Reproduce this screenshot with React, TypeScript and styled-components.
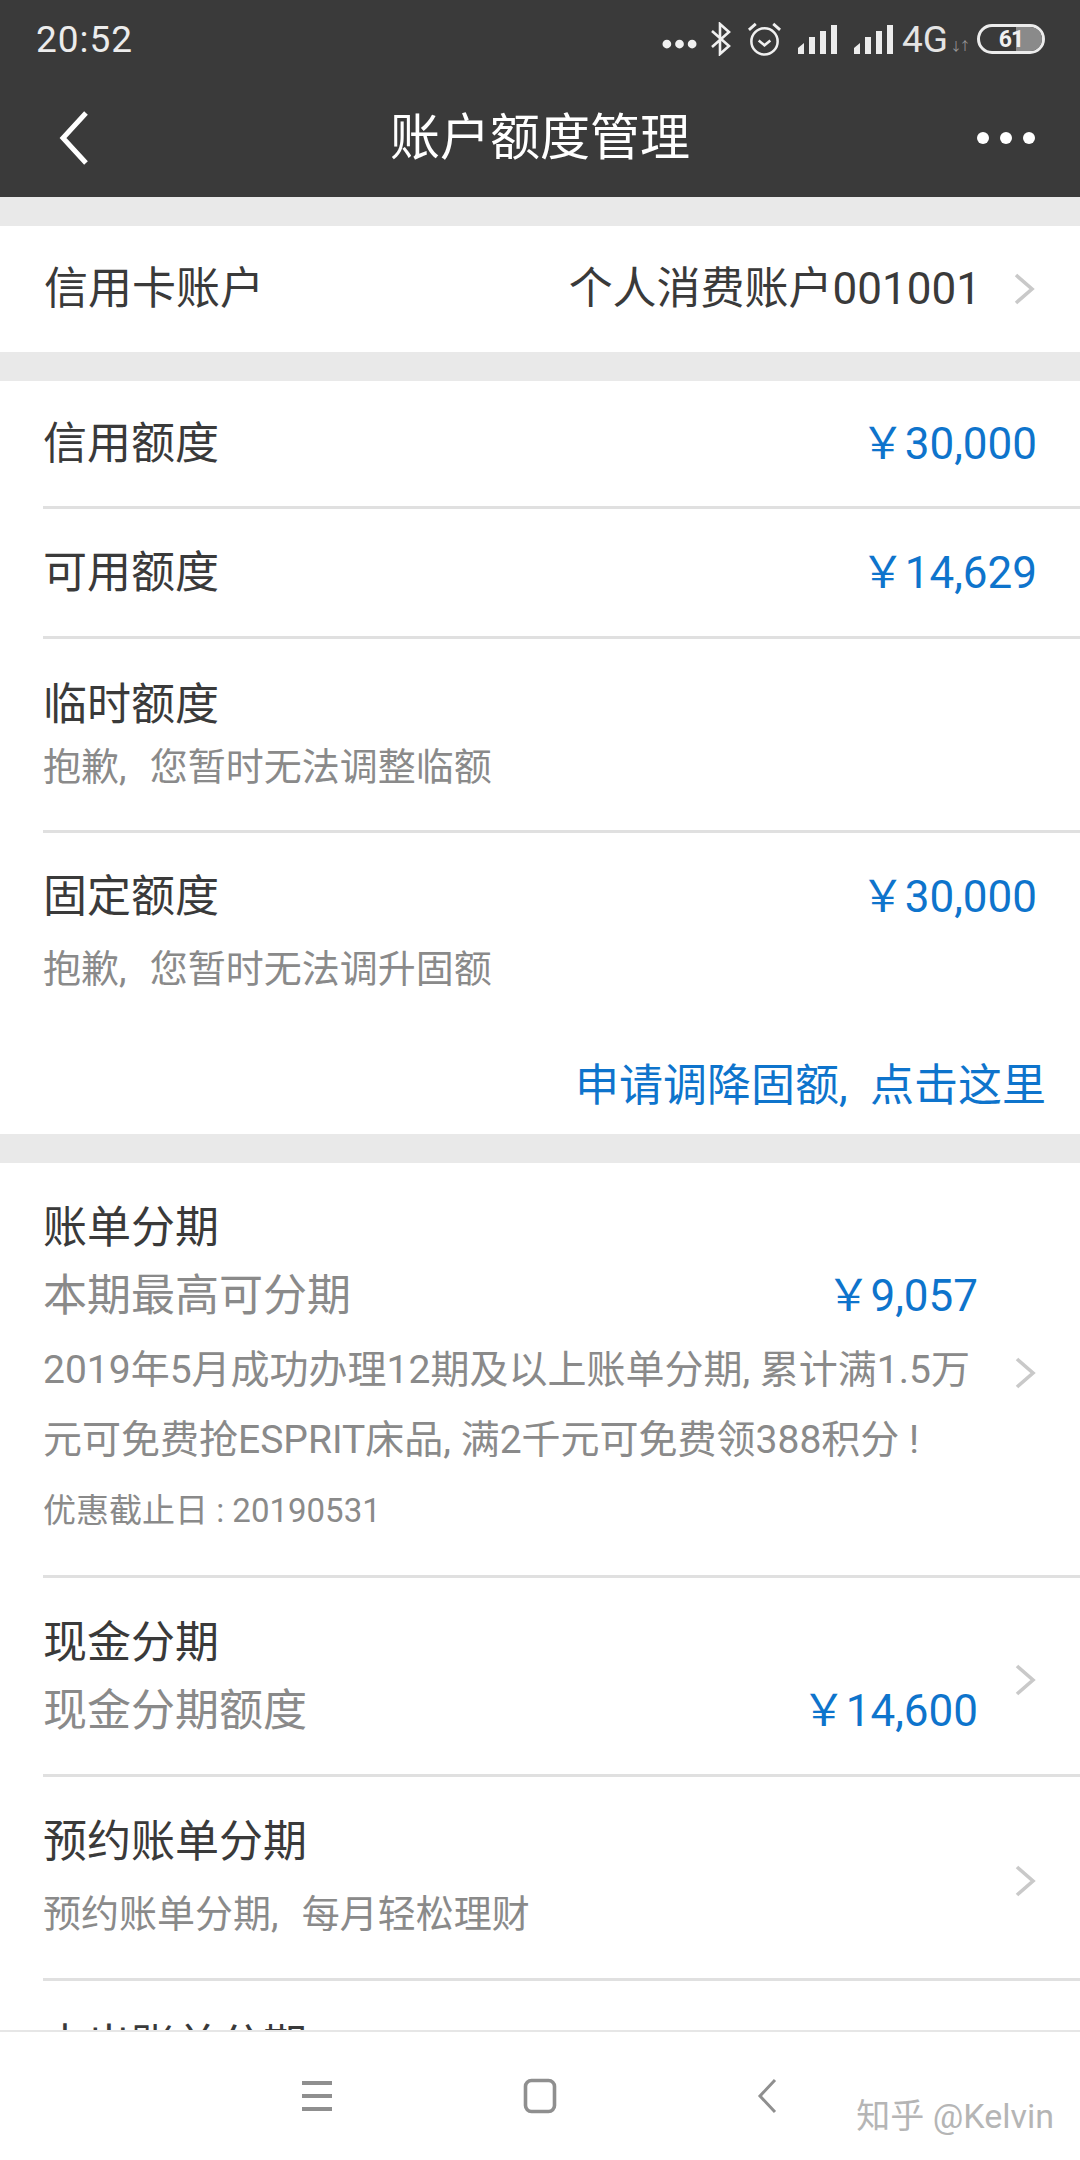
import React from 'react'
import styled, { createGlobalStyle } from 'styled-components'

const GlobalStyle = createGlobalStyle`
  html, body {
    margin: 0;
    padding: 0;
    background: #fff;
  }
  * {
    box-sizing: border-box;
  }
`

const Chevron = () => (
  <ChevronSvg viewBox="0 0 22 32">
    <path d="M3 2 L19 16 L3 30" fill="none" stroke="#c9c9c9" strokeWidth="3.6" />
  </ChevronSvg>
)

const SignalBars = () => (
  <svg width="40" height="29" viewBox="0 0 40 29">
    <path d="M0 29V23L6 18V29Z" fill="#ececec" />
    <rect x="11" y="12" width="6" height="17" fill="#ececec" />
    <rect x="22" y="6" width="6" height="23" fill="#ececec" />
    <rect x="33" y="0" width="6" height="29" fill="#ececec" />
  </svg>
)

const App = () => (
  <Screen>
    <GlobalStyle />
    <Header>
      <StatusBar>
        <Clock>20:52</Clock>
        <StatusIcons>
          <StatusDots viewBox="0 0 36 12">
            <circle cx="5" cy="6" r="4.5" fill="#f0f0f0" />
            <circle cx="18" cy="6" r="4.5" fill="#f0f0f0" />
            <circle cx="31" cy="6" r="4.5" fill="#f0f0f0" />
          </StatusDots>
          <BluetoothIcon viewBox="0 0 24 34">
            <path d="M3 9 L20 24 L11 32 V2 L20 10 L3 25" fill="none" stroke="#f0f0f0" strokeWidth="2.6" />
          </BluetoothIcon>
          <AlarmIcon viewBox="0 0 36 36">
            <circle cx="18" cy="20" r="13.5" fill="none" stroke="#f0f0f0" strokeWidth="2.6" />
            <path d="M12 19 L18 24 L24 19" fill="none" stroke="#f0f0f0" strokeWidth="2.6" />
            <path d="M2 8 L9 2 M34 8 L27 2" fill="none" stroke="#f0f0f0" strokeWidth="3" />
          </AlarmIcon>
          <SignalGroup>
            <SignalBars />
            <SignalBars />
          </SignalGroup>
          <Network>4G</Network>
          <DataArrows>↓↑</DataArrows>
          <Battery>
            <BatteryFill />
            <BatteryLevel>61</BatteryLevel>
          </Battery>
        </StatusIcons>
      </StatusBar>
      <TitleBar>
        <BackIcon viewBox="0 0 32 56">
          <path d="M28 3 L5 28 L28 53" fill="none" stroke="#fff" strokeWidth="5" />
        </BackIcon>
        <Title>账户额度管理</Title>
        <MoreIcon viewBox="0 0 60 14">
          <circle cx="7" cy="7" r="6" fill="#fff" />
          <circle cx="30" cy="7" r="6" fill="#fff" />
          <circle cx="53" cy="7" r="6" fill="#fff" />
        </MoreIcon>
      </TitleBar>
    </Header>

    <Content>
      <Card>
        <AccountRow>
          <Label>信用卡账户</Label>
          <AccountValue>
            <span>个人消费账户001001</span>
            <Chevron />
          </AccountValue>
        </AccountRow>
      </Card>

      <Card>
        <QuotaRow $height={128}>
          <Label>信用额度</Label>
          <Amount>￥30,000</Amount>
        </QuotaRow>
        <QuotaRow $height={130}>
          <Label>可用额度</Label>
          <Amount>￥14,629</Amount>
        </QuotaRow>
        <StackRow>
          <Label>临时额度</Label>
          <Note>抱歉,{'\u2002\u200a'}您暂时无法调整临额</Note>
        </StackRow>
        <FixedBlock>
          <SplitLine>
            <Label>固定额度</Label>
            <Amount>￥30,000</Amount>
          </SplitLine>
          <Note $loose>抱歉,{'\u2002\u200a'}您暂时无法调升固额</Note>
          <ActionLink>申请调降固额,{'\u2002'}点击这里</ActionLink>
        </FixedBlock>
      </Card>

      <Card>
        <LinkRow $height={415}>
          <LinkBody>
            <Label>账单分期</Label>
            <MutedLine>
              <MutedLabel>本期最高可分期</MutedLabel>
              <Amount>￥9,057</Amount>
            </MutedLine>
            <Promo>
              2019年5月成功办理12期及以上账单分期, 累计满1.5万
              <br />
              元可免费抢ESPRIT床品, 满2千元可免费领388积分 !
            </Promo>
            <Deadline>优惠截止日 : 20190531</Deadline>
          </LinkBody>
          <Chevron />
        </LinkRow>
        <LinkRow $height={199}>
          <LinkBody>
            <Label>现金分期</Label>
            <MutedLine>
              <MutedLabel>现金分期额度</MutedLabel>
              <Amount>￥14,600</Amount>
            </MutedLine>
          </LinkBody>
          <Chevron />
        </LinkRow>
        <LinkRow $height={204}>
          <LinkBody>
            <Label>预约账单分期</Label>
            <Note $loose>预约账单分期,{'\u2002\u200a'}每月轻松理财</Note>
          </LinkBody>
          <Chevron />
        </LinkRow>
        <LinkRow $height={120}>
          <LinkBody>
            <Label>未出账单分期</Label>
          </LinkBody>
        </LinkRow>
      </Card>
    </Content>

    <BottomNav>
      <svg width="34" height="32" viewBox="0 0 34 32">
        <path d="M2 3H32M2 16H32M2 29H32" fill="none" stroke="#8f8f8f" strokeWidth="4" />
      </svg>
      <svg width="34" height="36" viewBox="0 0 34 36">
        <rect x="2.5" y="2.5" width="29" height="31" rx="6" fill="none" stroke="#8f8f8f" strokeWidth="3.6" />
      </svg>
      <NavBack viewBox="0 0 22 36">
        <path d="M19 2 L4 18 L19 34" fill="none" stroke="#8f8f8f" strokeWidth="3" />
      </NavBack>
    </BottomNav>
    <Watermark>知乎 @Kelvin</Watermark>
  </Screen>
)

const FONT = `Roboto, "Noto Sans CJK SC", sans-serif`
const BLUE = '#0e74cc'

const Screen = styled.div`
  position: relative;
  display: flex;
  flex-direction: column;
  width: 1080px;
  height: 2160px;
  overflow: hidden;
  background: #fff;
  font-family: ${FONT};
`
const Header = styled.header`
  flex: none;
  height: 197px;
  background: #3a3a3a;
  color: #fff;
`
const StatusBar = styled.div`
  display: flex;
  align-items: center;
  justify-content: space-between;
  height: 78px;
  padding: 0 35px 0 36px;
`
const Clock = styled.span`
  font-size: 37px;
  color: #ececec;
  letter-spacing: 1px;
`
const StatusIcons = styled.div`
  display: flex;
  align-items: center;
`
const StatusDots = styled.svg`
  width: 35px;
  height: 12px;
  margin: 10px 12px 0 0;
`
const BluetoothIcon = styled.svg`
  width: 24px;
  height: 34px;
  margin-right: 14px;
`
const AlarmIcon = styled.svg`
  width: 35px;
  height: 35px;
  margin-right: 16px;
`
const SignalGroup = styled.div`
  display: flex;
  gap: 16px;
  margin-right: 8px;
`
const Network = styled.span`
  font-size: 37px;
  color: #e4e4e4;
`
const DataArrows = styled.span`
  font-size: 12px;
  color: #999;
  margin: 12px 9px 0 2px;
  letter-spacing: -3px;
`
const Battery = styled.div`
  position: relative;
  display: flex;
  align-items: center;
  justify-content: center;
  width: 68px;
  height: 30px;
  border: 3px solid #ececec;
  border-radius: 15px;
  overflow: hidden;
`
const BatteryFill = styled.div`
  position: absolute;
  right: 0;
  top: 0;
  bottom: 0;
  width: 26px;
  background: #8a8a8a;
`
const BatteryLevel = styled.span`
  position: relative;
  font-size: 23px;
  font-weight: 700;
  color: #f0f0f0;
  letter-spacing: -1px;
`
const TitleBar = styled.div`
  display: grid;
  grid-template-columns: 1fr auto 1fr;
  align-items: center;
  height: 119px;
  padding: 0 44px;
`
const BackIcon = styled.svg`
  width: 32px;
  height: 56px;
  margin-left: 14px;
`
const MoreIcon = styled.svg`
  justify-self: end;
  width: 60px;
  height: 14px;
`
const Title = styled.h1`
  margin: 0;
  font-size: 50px;
  line-height: 60px;
  font-weight: 400;
  color: #fff;
`
const Content = styled.main`
  flex: 1;
  min-height: 0;
  overflow: hidden;
  display: flex;
  flex-direction: column;
  gap: 29px;
  padding-top: 29px;
  background: #e9e9e9;
`
const Card = styled.section`
  flex: none;
  background: #fff;
`
const Label = styled.div`
  font-size: 44px;
  line-height: 56px;
  color: #3a3a3a;
`
const AccountRow = styled.div`
  display: flex;
  align-items: center;
  justify-content: space-between;
  height: 126px;
  padding: 0 45px 0 44px;
`
const AccountValue = styled.div`
  display: flex;
  align-items: center;
  gap: 32px;
  font-size: 44px;
  line-height: 56px;
  color: #3a3a3a;
  & > span {
    height: 56px;
  }
`
const ChevronSvg = styled.svg`
  flex: none;
  width: 22px;
  height: 34px;
`
const Amount = styled.div`
  height: 56px;
  font-size: 44px;
  line-height: 56px;
  color: ${BLUE};
  white-space: nowrap;
`
const QuotaRow = styled.div<{ $height: number }>`
  display: flex;
  align-items: center;
  justify-content: space-between;
  height: ${p => p.$height}px;
  margin-left: 43px;
  padding-right: 43px;
  border-bottom: 3px solid #e0e0e0;
`
const StackRow = styled.div`
  height: 194px;
  margin-left: 43px;
  padding-top: 38px;
  border-bottom: 3px solid #e0e0e0;
`
const Note = styled.div<{ $loose?: boolean }>`
  margin-top: ${p => (p.$loose ? 20 : 10)}px;
  height: 48px;
  font-size: 38px;
  line-height: 48px;
  color: #8a8a8a;
`
const FixedBlock = styled.div`
  padding: 36px 34px 20px 43px;
`
const SplitLine = styled.div`
  display: flex;
  justify-content: space-between;
  padding-right: 9px;
`
const ActionLink = styled.div`
  margin-top: 65px;
  height: 56px;
  text-align: right;
  font-size: 44px;
  line-height: 56px;
  color: ${BLUE};
`
const LinkRow = styled.div<{ $height: number }>`
  display: flex;
  align-items: flex-start;
  gap: 36px;
  height: ${p => p.$height}px;
  margin-left: 43px;
  padding: 37px 44px 0 0;
  border-bottom: 3px solid #e0e0e0;
  & > svg {
    align-self: center;
    margin-top: -30px;
  }
  &:last-child {
    border-bottom: 0;
  }
`
const LinkBody = styled.div`
  flex: 1;
  min-width: 0;
`
const MutedLine = styled.div`
  display: flex;
  justify-content: space-between;
  margin-top: 12px;
`
const MutedLabel = styled.div`
  font-size: 44px;
  line-height: 56px;
  color: #8a8a8a;
`
const Promo = styled.div`
  margin-top: 11px;
  font-size: 39px;
  line-height: 70px;
  color: #8a8a8a;
  white-space: nowrap;
`
const Deadline = styled.div`
  margin-top: 16px;
  font-size: 33px;
  line-height: 40px;
  color: #8a8a8a;
`
const BottomNav = styled.nav`
  flex: none;
  display: flex;
  align-items: center;
  gap: 189px;
  height: 130px;
  padding-left: 300px;
  background: #fff;
  border-top: 2px solid #e6e6e6;
`
const NavBack = styled.svg`
  width: 22px;
  height: 36px;
  margin-left: 10px;
`
const Watermark = styled.div`
  position: absolute;
  right: 26px;
  bottom: 22px;
  font-size: 34px;
  color: #b5b5b5;
`

export default App
